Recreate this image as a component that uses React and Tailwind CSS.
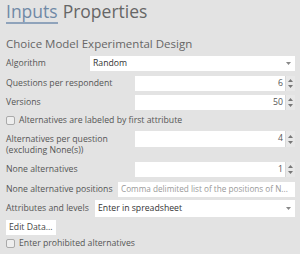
import React from "react";

const Spin = () => (
  <div className="flex w-[10px] flex-col items-center justify-center gap-[3px] bg-[#e8e8e8] border-l border-[#d8d8d8]">
    <svg width="5" height="3" viewBox="0 0 5 3"><path d="M0 3 L2.5 0 L5 3 Z" fill="#777" /></svg>
    <svg width="5" height="3" viewBox="0 0 5 3"><path d="M0 0 L2.5 3 L5 0 Z" fill="#777" /></svg>
  </div>
);

const Caret = () => (
  <svg width="5" height="3" viewBox="0 0 5 3" className="mr-[4px]"><path d="M0 0 L2.5 3 L5 0 Z" fill="#888" /></svg>
);

const NumInput = ({ value, className }) => (
  <div className={"flex bg-white " + className}>
    <div className="flex flex-1 items-center justify-end pr-[2px] text-[#555]">{value}</div>
    <Spin />
  </div>
);

const Check = ({ label }) => (
  <div className="flex items-center gap-[4px] pl-[6px]">
    <div className="h-[9px] w-[9px] rounded-[2px] border border-[#aaa] bg-[#eee]" />
    <span>{label}</span>
  </div>
);

export default function App() {
  return (
    <div
      className="h-[254px] w-[300px] overflow-hidden bg-[#e3e3e3] text-[8.7px] text-[#555]"
      style={{ fontFamily: '"Open Sans", sans-serif' }}
    >
      <div className="flex items-end gap-[5px] pl-[6px] text-[17.5px] leading-[22px]">
        <div className="border-b-2 border-[#8fa3bb] text-[#7089a6]">Inputs</div>
        <div className="pb-[2px] text-[#666]">Properties</div>
      </div>
      <div className="pl-[6px] pt-[12px] text-[11.5px] leading-[15px] text-[#666]">
        Choice Model Experimental Design
      </div>
      <div className="mt-[5px] flex flex-col pr-[5px]">
        <div className="flex h-[15px] items-center">
          <div className="w-[90px] pl-[6px]">Algorithm</div>
          <div className="flex h-[15px] flex-1 items-center justify-between bg-white pl-[3px] text-[#333]">
            <span>Random</span>
            <Caret />
          </div>
        </div>
        <div className="mt-[5px] flex h-[15px] items-center">
          <div className="w-[135px] pl-[6px]">Questions per respondent</div>
          <NumInput value="6" className="h-[15px] flex-1" />
        </div>
        <div className="mt-[4px] flex h-[15px] items-center">
          <div className="w-[135px] pl-[6px]">Versions</div>
          <NumInput value="50" className="h-[15px] flex-1" />
        </div>
        <div className="mt-[4px] flex h-[14px] items-center">
          <Check label="Alternatives are labeled by first attribute" />
        </div>
        <div className="mt-[3px] flex h-[25px] items-start">
          <div className="w-[135px] pl-[6px] pt-[3px] leading-[11px]">
            Alternatives per question
            <br />
            (excluding None(s))
          </div>
          <NumInput value="4" className="h-[16px] flex-1" />
        </div>
        <div className="mt-[6px] flex h-[15px] items-center">
          <div className="w-[135px] pl-[6px]">None alternatives</div>
          <NumInput value="1" className="h-[15px] flex-1" />
        </div>
        <div className="mt-[5px] flex h-[15px] items-center">
          <div className="w-[118px] pl-[6px] whitespace-nowrap">None alternative positions</div>
          <div className="flex h-[15px] min-w-0 flex-1 items-center overflow-hidden whitespace-nowrap bg-white pl-[3px] text-[8.2px] text-[#999]">
            Comma delimited list of the positions of N...
          </div>
        </div>
        <div className="mt-[3px] flex h-[17px] items-center">
          <div className="w-[95px] pl-[6px] whitespace-nowrap">Attributes and levels</div>
          <div className="flex h-[17px] flex-1 items-center justify-between bg-white pl-[3px] text-[#333]">
            <span>Enter in spreadsheet</span>
            <Caret />
          </div>
        </div>
        <div className="mt-[3px] pl-[6px]">
          <div className="flex h-[15px] w-[50px] items-center bg-white pl-[3px] text-[#444]">Edit Data...</div>
        </div>
        <div className="mt-[2px] flex h-[14px] items-center">
          <Check label="Enter prohibited alternatives" />
        </div>
      </div>
    </div>
  );
}
